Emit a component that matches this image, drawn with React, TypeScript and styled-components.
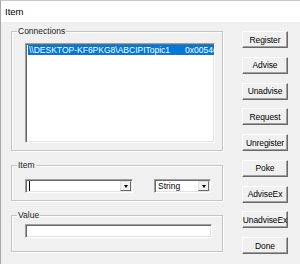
import React from "react";
import styled, { createGlobalStyle } from "styled-components";

const GlobalStyle = createGlobalStyle`
  body {
    margin: 0;
    background: #f0f0f0;
  }
`;

const Window = styled.div`
  width: 300px;
  height: 264px;
  box-sizing: border-box;
  background: #f0f0f0;
  border-top: 1px solid #c9c9c9;
  border-left: 1px solid #a8a8a8;
  font-family: "Liberation Sans", Arial, sans-serif;
  color: #000;
  overflow: hidden;
`;

const TitleBar = styled.div`
  height: 21px;
  background: #fff;
  display: flex;
  align-items: center;
  padding-left: 4px;
  font-size: 9.5px;
`;

const Body = styled.div`
  display: flex;
  padding: 9px 0 0 10px;
`;

const LeftColumn = styled.div`
  width: 212px;
  display: flex;
  flex-direction: column;
  gap: 14px;
`;

const GroupBox = styled.div<{ $height: number; $pad: string }>`
  position: relative;
  box-sizing: border-box;
  height: ${(p) => p.$height}px;
  padding: ${(p) => p.$pad};
  border: 1px solid #c4c4c4;
  box-shadow: inset 1px 1px 0 #fff, 1px 1px 0 #fff;
  display: flex;
  flex-direction: column;
`;

const Legend = styled.span`
  position: absolute;
  top: -6px;
  left: 5px;
  padding: 0 1px;
  background: #f0f0f0;
  font-size: 8.5px;
  line-height: 11px;
  color: #222;
`;

const Sunken = styled.div<{ $w?: number; $h?: number }>`
  box-sizing: border-box;
  background: #fff;
  border-top: 1px solid #a0a0a0;
  border-left: 1px solid #a0a0a0;
  border-bottom: 1px solid #fff;
  border-right: 1px solid #fff;
  box-shadow: inset 1px 1px 0 #696969, inset -1px -1px 0 #e3e3e3;
  ${(p) => (p.$w ? `width: ${p.$w}px;` : "")}
  ${(p) => (p.$h ? `height: ${p.$h}px;` : "")}
`;

const ListBox = styled(Sunken)`
  flex: 1;
  padding: 1px 0 0 2px;
  overflow: hidden;
`;

const SelectedRow = styled.div`
  height: 10px;
  background: #0078d7;
  color: #fff;
  font-size: 8.5px;
  line-height: 10px;
  white-space: nowrap;
  display: flex;
  padding-left: 1px;
`;

const Cell = styled.span<{ $w?: number }>`
  ${(p) => (p.$w ? `width: ${p.$w}px; flex: none;` : "")}
`;

const ComboRow = styled.div`
  display: flex;
  gap: 21px;
`;

const Combo = styled(Sunken)`
  display: flex;
  align-items: stretch;
  padding: 1px 1px 1px 2px;
  font-size: 8.5px;
  line-height: 10px;
`;

const ComboText = styled.div`
  flex: 1;
  display: flex;
  align-items: center;
  padding-left: 1px;
  white-space: nowrap;
  overflow: hidden;
`;

const Caret = styled.span`
  display: inline-block;
  width: 1px;
  height: 10px;
  background: #000;
`;

const DropButton = styled.div`
  width: 11px;
  box-sizing: border-box;
  background: #f0f0f0;
  border-top: 1px solid #e3e3e3;
  border-left: 1px solid #e3e3e3;
  border-right: 1px solid #696969;
  border-bottom: 1px solid #696969;
  display: flex;
  align-items: center;
  justify-content: center;
  &::after {
    content: "";
    border-left: 2.5px solid transparent;
    border-right: 2.5px solid transparent;
    border-top: 3px solid #000;
  }
`;

const ButtonColumn = styled.div`
  margin-left: 19px;
  width: 46px;
  display: flex;
  flex-direction: column;
  gap: 8.75px;
`;

const Button = styled.div`
  height: 17px;
  box-sizing: border-box;
  background: #f0f0f0;
  border-top: 1px solid #fff;
  border-left: 1px solid #fff;
  border-right: 1px solid #696969;
  border-bottom: 1px solid #696969;
  box-shadow: inset -1px -1px 0 #a0a0a0;
  display: flex;
  align-items: center;
  justify-content: center;
  font-size: 8.5px;
  white-space: nowrap;
  letter-spacing: -0.1px;
`;

const buttons = [
  "Register",
  "Advise",
  "Unadvise",
  "Request",
  "Unregister",
  "Poke",
  "AdviseEx",
  "UnadviseEx",
  "Done",
];

export default function App() {
  return (
    <Window>
      <GlobalStyle />
      <TitleBar>Item</TitleBar>
      <Body>
        <LeftColumn>
          <GroupBox $height={120} $pad="11px 7px 7px 13px">
            <Legend>Connections</Legend>
            <ListBox>
              <SelectedRow>
                <Cell $w={156}>\\DESKTOP-KF6PKG8\ABCIPITopic1</Cell>
                <Cell>0x0054e0</Cell>
              </SelectedRow>
            </ListBox>
          </GroupBox>
          <GroupBox $height={36} $pad="13px 0 0 13px">
            <Legend>Item</Legend>
            <ComboRow>
              <Combo $w={108} $h={14}>
                <ComboText>
                  <Caret />
                </ComboText>
                <DropButton />
              </Combo>
              <Combo $w={57} $h={14}>
                <ComboText>String</ComboText>
                <DropButton />
              </Combo>
            </ComboRow>
          </GroupBox>
          <GroupBox $height={37} $pad="8px 0 0 13px">
            <Legend>Value</Legend>
            <Sunken $w={187} $h={14} />
          </GroupBox>
        </LeftColumn>
        <ButtonColumn>
          {buttons.map((b) => (
            <Button key={b}>{b}</Button>
          ))}
        </ButtonColumn>
      </Body>
    </Window>
  );
}
